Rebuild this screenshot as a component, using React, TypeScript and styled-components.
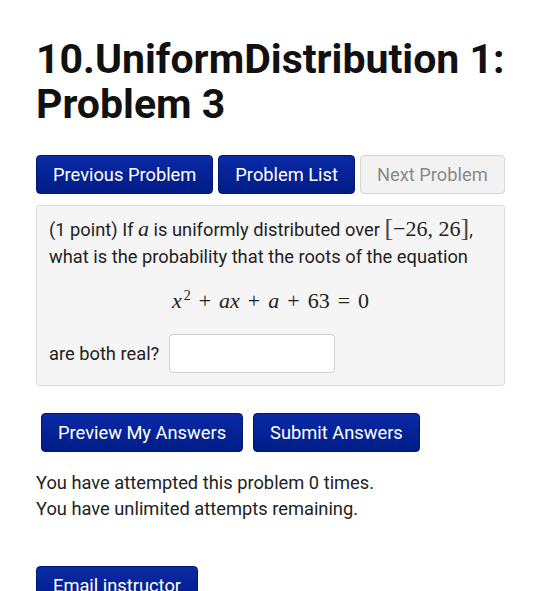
import React from "react";
import styled, { createGlobalStyle } from "styled-components";

const GlobalStyle = createGlobalStyle`
  html, body {
    margin: 0;
    padding: 0;
    background: #fff;
  }
  body {
    font-family: Roboto, "Liberation Sans", sans-serif;
    color: #222;
  }
`;

const Page = styled.div`
  padding: 37px 35px 0 36px;
  width: 540px;
  height: 591px;
  box-sizing: border-box;
  overflow: hidden;
`;

const Title = styled.h1`
  margin: 0;
  font-size: 41px;
  line-height: 45px;
  font-weight: 700;
  color: #111;
  white-space: nowrap;
`;

const NavRow = styled.div`
  display: flex;
  gap: 5px;
  margin-top: 28px;
`;

const Button = styled.button<{ $disabled?: boolean }>`
  flex-shrink: 0;
  white-space: nowrap;
  height: 39px;
  padding: 0 16px;
  border-radius: 4px;
  font-family: Roboto, "Liberation Sans", sans-serif;
  font-size: 18.3px;
  box-sizing: border-box;
  border: 1px solid ${(p) => (p.$disabled ? "#d6d6d6" : "#00176e")};
  background: ${(p) =>
    p.$disabled ? "#f2f2f2" : "linear-gradient(#0a2aa6, #001c86)"};
  color: ${(p) => (p.$disabled ? "#8a8a8a" : "#fff")};
  cursor: pointer;
`;

const ProblemBox = styled.div`
  margin-top: 11px;
  background: #f5f5f5;
  border: 1px solid #dcdcdc;
  border-radius: 3px;
  padding: 10px 12px 12px 12px;
  font-size: 18.3px;
  line-height: 27px;
  color: #222;
`;

const MathVar = styled.span`
  font-family: "Liberation Serif", "DejaVu Serif", serif;
  font-style: italic;
  font-size: 22px;
  line-height: 0;
`;

const MathText = styled.span`
  font-family: "Liberation Serif", "DejaVu Serif", serif;
  font-size: 22px;
  line-height: 0;
`;

const Bracket = styled.span`
  font-family: "Liberation Serif", serif;
  font-size: 26px;
  font-weight: 300;
  line-height: 0;
  color: #444;
`;

const Equation = styled.div`
  text-align: center;
  margin: 16px 0 0;
  line-height: 30px;
  font-family: "Liberation Serif", "DejaVu Serif", serif;
  font-size: 22px;
`;

const Op = styled.span`
  margin: 0 8px;
`;

const Sup = styled.sup`
  font-size: 14px;
  font-style: normal;
  line-height: 0;
  margin-left: 2px;
`;

const AnswerRow = styled.div`
  display: flex;
  align-items: center;
  gap: 10px;
  margin-top: 18px;
`;

const AnswerInput = styled.input`
  width: 166px;
  height: 39px;
  box-sizing: border-box;
  border: 1px solid #cfcfcf;
  border-radius: 4px;
  background: #fff;
`;

const SubmitRow = styled.div`
  display: flex;
  gap: 10px;
  margin: 27px 0 0 5px;
`;

const Info = styled.p`
  margin: 18px 0 0;
  font-size: 18.3px;
  line-height: 26px;
  color: #222;
`;

const EmailRow = styled.div`
  margin-top: 44px;
`;

export default function App() {
  return (
    <>
      <GlobalStyle />
      <Page>
        <Title>
          10.UniformDistribution 1:
          <br />
          Problem 3
        </Title>
        <NavRow>
          <Button>Previous Problem</Button>
          <Button>Problem List</Button>
          <Button $disabled>Next Problem</Button>
        </NavRow>
        <ProblemBox>
          (1 point) If <MathVar>a</MathVar> is uniformly distributed over{" "}
          <Bracket>[</Bracket>
          <MathText>−26, 26</MathText>
          <Bracket>]</Bracket>,
          <br />
          what is the probability that the roots of the equation
          <Equation>
            <MathVar>x</MathVar>
            <Sup>2</Sup>
            <Op>+</Op>
            <MathVar>ax</MathVar>
            <Op>+</Op>
            <MathVar>a</MathVar>
            <Op>+</Op>
            63
            <Op>=</Op>0
          </Equation>
          <AnswerRow>
            are both real?
            <AnswerInput type="text" />
          </AnswerRow>
        </ProblemBox>
        <SubmitRow>
          <Button>Preview My Answers</Button>
          <Button>Submit Answers</Button>
        </SubmitRow>
        <Info>
          You have attempted this problem 0 times.
          <br />
          You have unlimited attempts remaining.
        </Info>
        <EmailRow>
          <Button>Email instructor</Button>
        </EmailRow>
      </Page>
    </>
  );
}
